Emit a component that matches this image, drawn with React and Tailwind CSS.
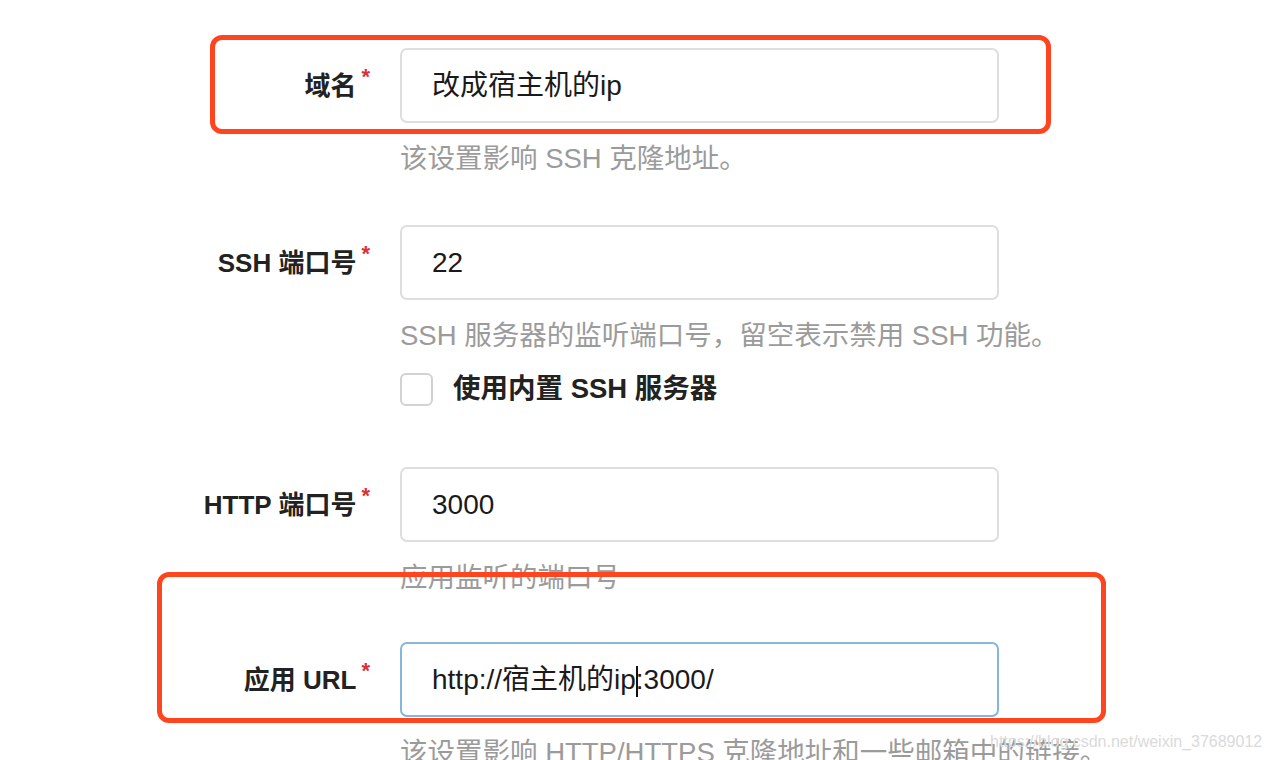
import React from "react";

const FONT = { fontFamily: '"Liberation Sans", "Noto Sans CJK SC", sans-serif' };

const Label = ({ text }) => (
  <div className="w-[400px] h-[75px] flex items-center justify-end pr-[30px] shrink-0">
    <span className="text-[26px] font-bold text-[#222] leading-none">{text}</span>
    <span className="ml-[5px] text-[22px] font-bold text-[#d9303a] leading-none relative -top-[9px]">*</span>
  </div>
);

const Field = ({ label, value, help, focused, mb, children }) => (
  <div className="flex" style={{ marginBottom: mb }}>
    <Label text={label} />
    <div className="w-[599px]">
      <div
        className={`h-[75px] border-2 rounded-[7px] pl-[30px] flex items-center text-[28px] text-[#1a1a1a] ${
          focused ? "border-[#86b6da]" : "border-[#dedede]"
        }`}
      >
        {value}
      </div>
      <div className="mt-[16px] leading-[40px] text-[27.5px] text-[#9b9b9b] whitespace-nowrap">{help}</div>
      {children}
    </div>
  </div>
);

export default function App() {
  return (
    <div className="relative w-[1272px] h-[760px] overflow-hidden bg-white" style={FONT}>
      <div className="pt-[48px]">
        <Field label="域名" value="改成宿主机的ip" help="该设置影响 SSH 克隆地址。" mb={46} />
        <Field label="SSH 端口号" value="22" help="SSH 服务器的监听端口号，留空表示禁用 SSH 功能。" mb={58}>
          <div className="mt-[13px] h-[40px] flex items-center">
            <div className="w-[33px] h-[33px] border-2 border-[#d2d2d2] rounded-[6px] bg-white" />
            <span className="ml-[20px] text-[27.5px] font-bold text-[#222]">使用内置 SSH 服务器</span>
          </div>
        </Field>
        <Field label="HTTP 端口号" value="3000" help="应用监听的端口号" mb={44} />
        <Field
          label="应用 URL"
          focused
          value={
            <span className="relative">
              http://宿主机的ip
              <span className="relative inline-block w-0">
                <span className="absolute left-0 -top-[23px] w-[2px] h-[31px] bg-[#111]" />
              </span>
              :3000/
            </span>
          }
          help="该设置影响 HTTP/HTTPS 克隆地址和一些邮箱中的链接。"
          mb={0}
        />
      </div>

      {/* annotation boxes */}
      <div className="absolute left-[210px] top-[35px] w-[841px] h-[99px] border-[5px] border-[#fe4520] rounded-[12px]" />
      <div className="absolute left-[157px] top-[572px] w-[949px] h-[151px] border-[5px] border-[#fe4520] rounded-[12px]" />

      {/* watermark */}
      <div className="absolute left-[990px] top-[734px] text-[16px] text-[#dadada] whitespace-nowrap leading-none">
        https://blog.csdn.net/weixin_37689012
      </div>
    </div>
  );
}
